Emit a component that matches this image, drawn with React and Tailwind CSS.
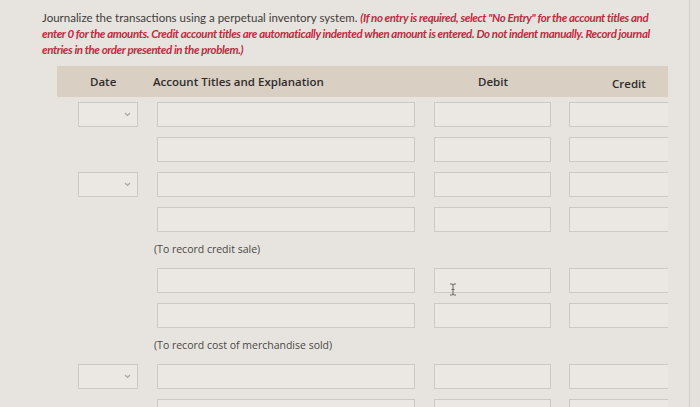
import React from 'react';

const Select = () => (
  <div className="relative h-[25px] w-[60px] border border-[#cdc9c3] bg-[#ebe8e4]">
    <svg className="absolute right-[6px] top-[9px]" width="7" height="5" viewBox="0 0 7 5">
      <path d="M1 1 L3.5 3.5 L6 1" fill="none" stroke="#a9a5a0" strokeWidth="1.2" />
    </svg>
  </div>
);

const Box = ({ w }) => <div className={`h-[25px] shrink-0 border-[1.5px] border-[#cdc9c3] bg-[#ebe8e4] ${w}`} />;

const Row = ({ date, cursor }) => (
  <div className="flex h-[35px] items-center">
    <div className="w-[100px] shrink-0 pl-[21px]">{date && <Select />}</div>
    <Box w="w-[258px]" />
    <div className="w-[19px] shrink-0" />
    <div className="relative shrink-0">
      <Box w="w-[117px]" />
      {cursor && (
        <svg className="absolute left-[15px] top-[15px]" width="8" height="13" viewBox="0 0 8 13">
          <path d="M1 1 H3 Q4 1 4 2.5 V10.5 Q4 12 3 12 H1 M7 1 H5 Q4 1 4 2.5 M4 10.5 Q4 12 5 12 H7 M2.5 6.5 H5.5" fill="none" stroke="#6b6762" strokeWidth="1" />
        </svg>
      )}
    </div>
    <div className="w-[18px] shrink-0" />
    <Box w="w-[120px]" />
  </div>
);

const Label = ({ children }) => (
  <div className="flex h-[26px] items-center pl-[97px] text-[10.5px] text-[#4a4744]" style={{ fontFamily: '"Open Sans", sans-serif' }}>
    {children}
  </div>
);

export default function App() {
  return (
    <div className="h-[407px] w-[700px] overflow-hidden bg-[#e4e1dd]">
      <div className="h-full w-[690px] border-r border-[#d2cec9] bg-[#e7e4e0] pl-[42px] pt-[10px]">
        <p className="w-[616px] text-[11.5px] leading-[16px] text-[#3f3c3a]" style={{ fontFamily: 'Lato, sans-serif' }}>
          Journalize the transactions using a perpetual inventory system.{' '}
          <span className="font-bold italic tracking-[-0.4px] text-[#c42a3f]">
            (If no entry is required, select "No Entry" for the account titles and enter 0 for the amounts. Credit account titles are automatically indented when amount is entered. Do not indent manually. Record journal entries in the order presented in the problem.)
          </span>
        </p>
        <div className="ml-[15px] mt-[8px] w-[611px] overflow-hidden" style={{ fontFamily: '"Open Sans", sans-serif' }}>
          <div className="flex h-[31px] items-center bg-[#d9cfc3] text-[11.5px] font-semibold text-[#2f2d2b]">
            <div className="w-[96px] shrink-0 pl-[33px]">Date</div>
            <div className="w-[325px] shrink-0">Account Titles and Explanation</div>
            <div className="w-[134px] shrink-0">Debit</div>
            <div className="pt-[5px]">Credit</div>
          </div>
          <Row date />
          <Row />
          <Row date />
          <Row />
          <Label>(To record credit sale)</Label>
          <Row cursor />
          <Row />
          <Label>(To record cost of merchandise sold)</Label>
          <Row date />
          <Row />
        </div>
      </div>
    </div>
  );
}
